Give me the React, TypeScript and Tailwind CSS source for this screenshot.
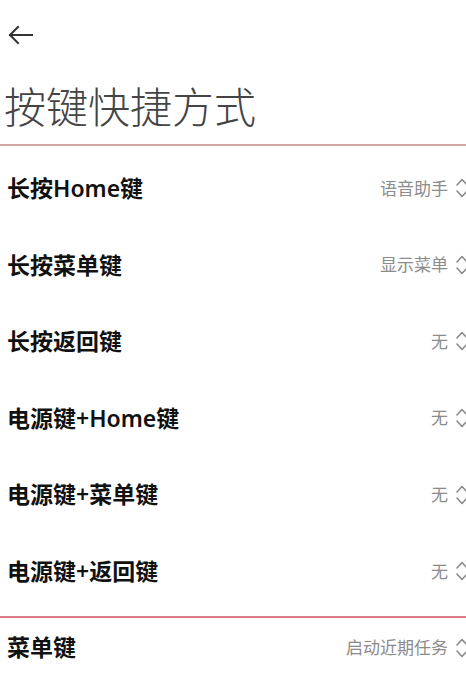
import React from "react";

const rows = [
  { label: "长按Home键", value: "语音助手" },
  { label: "长按菜单键", value: "显示菜单" },
  { label: "长按返回键", value: "无" },
  { label: "电源键+Home键", value: "无" },
  { label: "电源键+菜单键", value: "无" },
  { label: "电源键+返回键", value: "无" },
];

function Chevrons() {
  return (
    <svg width="14" height="24" viewBox="0 0 14 24" fill="none" stroke="#8a8a8a" strokeWidth="1.6" strokeLinecap="round" strokeLinejoin="round" className="shrink-0">
      <path d="M2 9 L7 3.5 L12 9" />
      <path d="M2 15 L7 20.5 L12 15" />
    </svg>
  );
}

function Row({ label, value, h }: { label: string; value: string; h: string }) {
  return (
    <div className={`flex items-center justify-between pl-[7px] ${h}`}>
      <span className="text-[23px] font-semibold text-[#111]">{label}</span>
      <div className="flex items-center gap-[7px] mr-[-3px]">
        <span className="text-[17px] text-[#8c8c8c]">{value}</span>
        <Chevrons />
      </div>
    </div>
  );
}

export default function App() {
  return (
    <div
      className="w-[466px] h-[694px] overflow-hidden bg-white"
      style={{ fontFamily: '"Noto Sans", "Noto Sans CJK SC", sans-serif' }}
    >
      <div className="h-[70px] flex items-center pl-[8px]">
        <svg width="26" height="20" viewBox="0 0 26 20" fill="none" stroke="#333" strokeWidth="2" strokeLinecap="square">
          <path d="M2 10 H24" />
          <path d="M10 2 L2 10 L10 18" />
        </svg>
      </div>
      <div className="h-[74px] flex items-center pl-[4px]">
        <span className="text-[42px] font-light text-[#444] leading-none">按键快捷方式</span>
      </div>
      <div className="h-[2px] bg-[#d3a6a6]" />
      <div className="pt-[4px]">
        {rows.map((r) => (
          <Row key={r.label} label={r.label} value={r.value} h="h-[76.6px]" />
        ))}
      </div>
      <div className="mt-[6px] h-[2px] bg-[#dd7c86]" />
      <Row label="菜单键" value="启动近期任务" h="h-[60px]" />
    </div>
  );
}
